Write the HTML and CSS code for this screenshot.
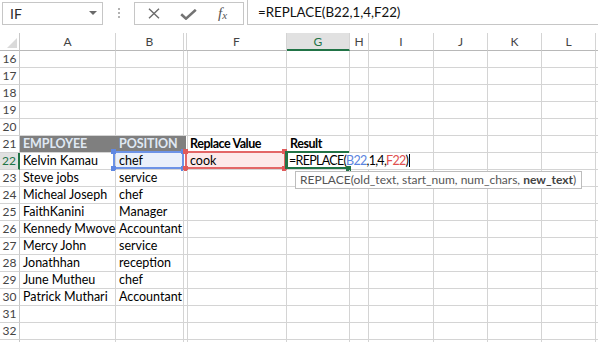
FILE: index.html
```html
<!DOCTYPE html>
<html>
<head>
<meta charset="utf-8">
<link rel="stylesheet" href="styles.css">
</head>
<body>
<div class="fbar">
  <div class="namebox"><span class="nb-text">IF</span><span class="nb-arrow"></span></div>
  <div class="grip"><i></i><i></i><i></i></div>
  <div class="btns">
    <svg class="ic-x" width="12" height="11" viewBox="0 0 12 11"><path d="M1 0.8 L11 10.2 M11 0.8 L1 10.2" stroke="#6b6b6b" stroke-width="1.4" fill="none"/></svg>
    <svg class="ic-ok" width="17" height="11" viewBox="0 0 17 11"><path d="M1.2 5.2 L6 9.6 L15.8 0.8" stroke="#737373" stroke-width="2.6" fill="none"/></svg>
    <span class="ic-fx"><span class="fx-f">f</span><span class="fx-x">x</span></span>
  </div>
  <div class="finput">=REPLACE(B22,1,4,F22)</div>
</div>

<div class="sheet">
  <div class="corner"><span class="tri"></span></div>
  <div class="ch">A</div><div class="ch">B</div><div class="ch"></div><div class="ch">F</div><div class="ch on">G</div><div class="ch">H</div><div class="ch">I</div><div class="ch">J</div><div class="ch">K</div><div class="ch">L</div><div class="ch end"></div>

  <div class="rh">16</div><div class="c"></div><div class="c"></div><div class="c"></div><div class="c"></div><div class="c"></div><div class="c"></div><div class="c"></div><div class="c"></div><div class="c"></div><div class="c"></div><div class="c end"></div>
  <div class="rh">17</div><div class="c"></div><div class="c"></div><div class="c"></div><div class="c"></div><div class="c"></div><div class="c"></div><div class="c"></div><div class="c"></div><div class="c"></div><div class="c"></div><div class="c end"></div>
  <div class="rh">18</div><div class="c"></div><div class="c"></div><div class="c"></div><div class="c"></div><div class="c"></div><div class="c"></div><div class="c"></div><div class="c"></div><div class="c"></div><div class="c"></div><div class="c end"></div>
  <div class="rh">19</div><div class="c"></div><div class="c"></div><div class="c"></div><div class="c"></div><div class="c"></div><div class="c"></div><div class="c"></div><div class="c"></div><div class="c"></div><div class="c"></div><div class="c end"></div>
  <div class="rh">20</div><div class="c"></div><div class="c"></div><div class="c"></div><div class="c"></div><div class="c"></div><div class="c"></div><div class="c"></div><div class="c"></div><div class="c"></div><div class="c"></div><div class="c end"></div>

  <div class="rh">21</div><div class="c hdr">EMPLOYEE</div><div class="c hdr hdr-b">POSITION</div><div class="c hid21"></div><div class="c b">Replace Value</div><div class="c b">Result</div><div class="c"></div><div class="c"></div><div class="c"></div><div class="c"></div><div class="c"></div><div class="c end"></div>

  <div class="rh on">22</div>
  <div class="c">Kelvin Kamau</div>
  <div class="c ref blue">chef<i class="frame"></i><i class="sq tl"></i><i class="sq tr"></i><i class="sq bl"></i><i class="sq br"></i></div>
  <div class="c"></div>
  <div class="c ref red">cook<i class="frame"></i><i class="sq tl"></i><i class="sq tr"></i><i class="sq bl"></i><i class="sq br"></i></div>
  <div class="c edit"><span class="ftxt">=REPLACE(<span class="t-blue">B22</span>,1,4,<span class="t-red">F22</span>)</span><span class="caret"></span><i class="g-top"></i><i class="g-bot"></i><i class="g-left"></i><i class="g-handle"></i><div class="tip">REPLACE(old_text, start_num, num_chars, <b>new_text</b>)</div></div>
  <div class="c"></div><div class="c"></div><div class="c"></div><div class="c end"></div>

  <div class="rh">23</div><div class="c">Steve jobs</div><div class="c">service</div><div class="c"></div><div class="c"></div><div class="c"></div><div class="c"></div><div class="c"></div><div class="c"></div><div class="c"></div><div class="c"></div><div class="c end"></div>
  <div class="rh">24</div><div class="c">Micheal Joseph</div><div class="c">chef</div><div class="c"></div><div class="c"></div><div class="c"></div><div class="c"></div><div class="c"></div><div class="c"></div><div class="c"></div><div class="c"></div><div class="c end"></div>
  <div class="rh">25</div><div class="c">FaithKanini</div><div class="c">Manager</div><div class="c"></div><div class="c"></div><div class="c"></div><div class="c"></div><div class="c"></div><div class="c"></div><div class="c"></div><div class="c"></div><div class="c end"></div>
  <div class="rh">26</div><div class="c">Kennedy Mwove</div><div class="c">Accountant</div><div class="c"></div><div class="c"></div><div class="c"></div><div class="c"></div><div class="c"></div><div class="c"></div><div class="c"></div><div class="c"></div><div class="c end"></div>
  <div class="rh">27</div><div class="c">Mercy John</div><div class="c">service</div><div class="c"></div><div class="c"></div><div class="c"></div><div class="c"></div><div class="c"></div><div class="c"></div><div class="c"></div><div class="c"></div><div class="c end"></div>
  <div class="rh">28</div><div class="c">Jonathhan</div><div class="c">reception</div><div class="c"></div><div class="c"></div><div class="c"></div><div class="c"></div><div class="c"></div><div class="c"></div><div class="c"></div><div class="c"></div><div class="c end"></div>
  <div class="rh">29</div><div class="c">June Mutheu</div><div class="c">chef</div><div class="c"></div><div class="c"></div><div class="c"></div><div class="c"></div><div class="c"></div><div class="c"></div><div class="c"></div><div class="c"></div><div class="c end"></div>
  <div class="rh">30</div><div class="c">Patrick Muthari</div><div class="c">Accountant</div><div class="c"></div><div class="c"></div><div class="c"></div><div class="c"></div><div class="c"></div><div class="c"></div><div class="c"></div><div class="c"></div><div class="c end"></div>
  <div class="rh">31</div><div class="c"></div><div class="c"></div><div class="c"></div><div class="c"></div><div class="c"></div><div class="c"></div><div class="c"></div><div class="c"></div><div class="c"></div><div class="c"></div><div class="c end"></div>
  <div class="rh">32</div><div class="c"></div><div class="c"></div><div class="c"></div><div class="c"></div><div class="c"></div><div class="c"></div><div class="c"></div><div class="c"></div><div class="c"></div><div class="c"></div><div class="c end"></div>
  <div class="rh"></div><div class="c"></div><div class="c"></div><div class="c"></div><div class="c"></div><div class="c"></div><div class="c"></div><div class="c"></div><div class="c"></div><div class="c"></div><div class="c"></div><div class="c end"></div>
</div>
</body>
</html>
```

FILE: styles.css
```css
* { box-sizing: border-box; }
html, body { margin: 0; padding: 0; background: #fff; overflow: hidden; }
body { width: 598px; height: 342px; font-family: Lato, "Liberation Sans", sans-serif; }

/* formula bar */
.fbar { display: flex; align-items: flex-start; height: 25px; }
.namebox {
  margin: 2px 0 0 2px; width: 101px; height: 23px;
  border: 1px solid #c6c6c6; display: flex; align-items: center;
  padding-left: 7px;
}
.nb-text { font-size: 14px; color: #2b2b2b; line-height: 21px; }
.nb-arrow {
  margin-left: auto; margin-right: 5px; width: 0; height: 0;
  border-left: 4px solid transparent; border-right: 4px solid transparent;
  border-top: 4px solid #6a6a6a; margin-top: -2px;
}
.grip { width: 31px; height: 25px; display: flex; flex-direction: column; align-items: center; padding-top: 8px; gap: 2px; }
.grip i { display: block; width: 2px; height: 2px; background: #b3b3b3; }
.btns {
  margin-top: 2px; width: 110px; height: 23px; border: 1px solid #c6c6c6;
  display: flex; align-items: center;
}
.ic-x { margin-left: 13px; }
.ic-ok { margin-left: 20px; margin-top: 1px; }
.ic-fx { margin-left: 21px; font-family: "Liberation Serif", serif; font-style: italic; color: #555; line-height: 12px; }
.fx-f { font-size: 15px; }
.fx-x { font-size: 11px; position: relative; top: 1px; }
.finput {
  flex: 1; margin-left: 3px; height: 25px; border-left: 1px solid #c6c6c6; border-bottom: 1px solid #c6c6c6;
  padding-left: 10px; font-size: 13.3px; line-height: 24px; color: #111; white-space: nowrap;
}

/* sheet grid */
.sheet {
  margin-top: 8px; display: grid;
  grid-template-columns: 20px 96px 68px 3px 100px 63px 19px 65px 54px 54px 54px 2px;
  grid-template-rows: 18px; grid-auto-rows: 17px;
}
.corner { border-right: 1px solid #c8c8c8; border-bottom: 1px solid #b8b8b8; display: flex; justify-content: flex-end; align-items: flex-end; padding: 0 2px 2px 0; }
.tri { width: 0; height: 0; border-left: 10px solid transparent; border-bottom: 10px solid #dadada; }
.ch {
  border-right: 1px solid #d4d4d4; border-bottom: 1px solid #b8b8b8;
  text-align: center; font-size: 12px; line-height: 17px; color: #444;
}
.ch.on { background: #e1e1e1; color: #217346; border-bottom: 2px solid #217346; }
.ch.end, .c.end { border-right: none; }
.rh {
  border-right: 1px solid #c8c8c8; border-bottom: 1px solid #d4d4d4;
  text-align: center; font-size: 12px; line-height: 16px; color: #444;
}
.rh.on { background: #e1e1e1; color: #217346; border-right: 2px solid #217346; }
.c {
  border-right: 1px solid #d4d4d4; border-bottom: 1px solid #d4d4d4;
  padding: 0 0 0 3px; font-size: 12.5px; line-height: 16px; color: #000; white-space: nowrap;
  position: relative;
}
.c.b { font-weight: 700; letter-spacing: -0.45px; }
.c.hdr { background: #7f7f7f; color: #dfe8f3; font-weight: 700; border-right-color: #7f7f7f; letter-spacing: -0.1px; }
.c.hdr-b { border-right-color: #7f7f7f; }
.c.hid21 { background: linear-gradient(to right, #7f7f7f 2px, #fff 2px); }

/* reference boxes */
.ref .frame { position: absolute; top: -2px; bottom: 0; border: 2px solid; }
.ref .sq { position: absolute; width: 5px; height: 5px; }
.ref .tl { top: -4px; }
.ref .tr { top: -4px; }
.ref .bl { bottom: -2px; }
.ref .br { bottom: -2px; }
.blue { background: #eaf0fb; }
.blue .frame { left: -3px; right: -1px; border-color: #6d93e6; }
.blue .sq { background: #5f87e2; }
.blue .tl, .blue .bl { left: -5px; }
.blue .tr, .blue .br { right: -3px; }
.red { background: #fde9e9; }
.red .frame { left: -2px; right: 0; border-color: #e36666; }
.red .sq { background: #e05a5a; }
.red .tl, .red .bl { left: -4px; }
.red .tr, .red .br { right: -1px; }

/* editing cell */
.edit { grid-column: span 3; padding-left: 2px; }
.ftxt { letter-spacing: -0.7px; }
.t-blue { color: #5b84e0; }
.t-red { color: #e0504f; }
.caret { display: inline-block; width: 1px; height: 13px; background: #000; vertical-align: -2px; margin-left: 1px; }
.g-top, .g-bot, .g-left, .g-handle { position: absolute; background: #217346; }
.g-top { left: -2px; width: 64px; top: -2px; height: 2px; }
.g-bot { left: -2px; width: 63px; bottom: 0; height: 2px; }
.g-left { left: -2px; width: 3px; top: -2px; bottom: 0; }
.g-handle { left: 59px; top: 13px; width: 5px; height: 5px; }
.tip {
  position: absolute; left: 8px; top: 18px; height: 18px;
  border: 1px solid #bdbdbd; background: #fff; padding: 0 5px 0 4px;
  font-size: 12px; line-height: 16px; color: #555; white-space: nowrap; z-index: 2;
}
.tip b { font-weight: 700; color: #444; }
```
